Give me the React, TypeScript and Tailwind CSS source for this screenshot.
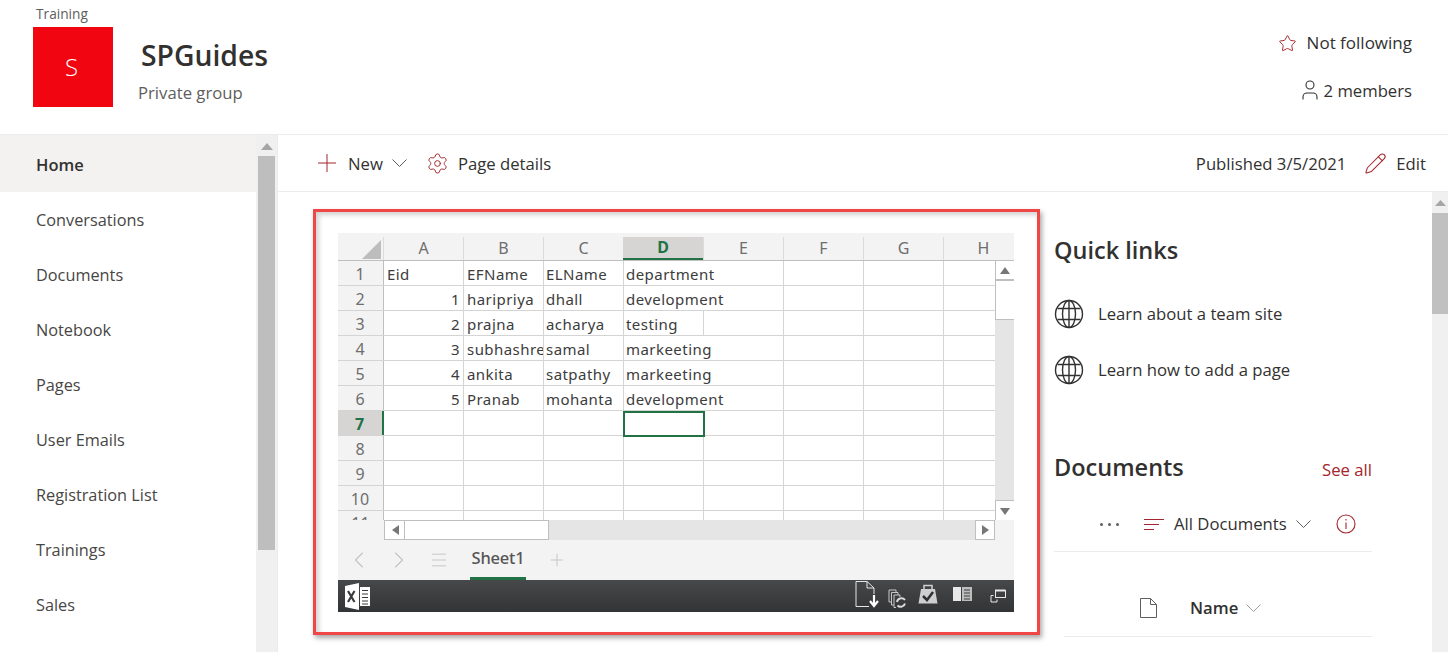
import React from 'react';
import { Plus, Settings, Star, User, Pencil, ChevronLeft, ChevronRight, Menu } from 'lucide-react';

const navItems = ['Home', 'Conversations', 'Documents', 'Notebook', 'Pages', 'User Emails', 'Registration List', 'Trainings', 'Sales'];
const columns = ['A', 'B', 'C', 'D', 'E', 'F', 'G', 'H'];

// a cell whose text spills over hides its right border
const rows: { a?: string; b?: string; c?: string; d?: string; open?: boolean }[] = [
  { a: 'Eid', b: 'EFName', c: 'ELName', d: 'department', open: true },
  { a: '1', b: 'haripriya', c: 'dhall', d: 'development', open: true },
  { a: '2', b: 'prajna', c: 'acharya', d: 'testing' },
  { a: '3', b: 'subhashre', c: 'samal', d: 'markeeting', open: true },
  { a: '4', b: 'ankita', c: 'satpathy', d: 'markeeting', open: true },
  { a: '5', b: 'Pranab', c: 'mohanta', d: 'development', open: true },
  {},
  {},
  {},
  {},
];

const Triangle = ({ dir }: { dir: 'up' | 'down' | 'left' | 'right' }) => {
  const points = { up: '1,10 6,3 11,10', down: '1,3 6,10 11,3', left: '10,1 3,6 10,11', right: '3,1 10,6 3,11' }[dir];
  return (
    <svg width="12" height="12" viewBox="0 0 12 12">
      <polygon points={points} fill="#777777" />
    </svg>
  );
};

const Chevron = ({ color = '#605e5c' }: { color?: string }) => (
  <svg width="15" height="8" viewBox="0 0 15 8" fill="none" stroke={color} strokeWidth="1">
    <path d="M0.5 0.5 L7.5 7.5 L14.5 0.5" />
  </svg>
);

const GlobeIcon = () => (
  <svg width="30" height="30" viewBox="0 0 30 30" fill="none" stroke="#323130" strokeWidth="1.4">
    <circle cx="15" cy="15" r="13.5" />
    <ellipse cx="15" cy="15" rx="6.5" ry="13.5" />
    <path d="M15 1.5 V28.5 M3.5 9.5 H26.5 M3.5 20.5 H26.5" />
  </svg>
);

const ExcelLogo = () => (
  <svg width="27" height="27" viewBox="0 0 27 27">
    <path d="M1 3 L15 0 V27 L1 24 Z" fill="#ffffff" />
    <path d="M16 4 H26 V23 H16 Z" fill="#ffffff" />
    <path d="M18 7.5 H24 M18 11 H24 M18 14.5 H24 M18 18 H24 M18 21 H24" stroke="#3a3b3d" strokeWidth="1" />
    <path d="M4 8 L10.5 19 M10.5 8 L4 19" stroke="#3a3b3d" strokeWidth="2.2" />
  </svg>
);

const BarIcons = () => (
  <div className="flex items-end pr-[8px] pb-[3px]">
    <svg width="25" height="27" viewBox="0 0 25 27" fill="none" stroke="#e6e6e6" strokeWidth="1">
      <path d="M14 25.5 H1 V0.5 H12 L19 7 V13 M12 0.5 V7 H19" />
      <path d="M19 14 V24 M15 20 L19 25 L23 20" strokeWidth="2.2" stroke="#ffffff" />
    </svg>
    <svg width="19" height="19" viewBox="0 0 19 19" fill="none" stroke="#c8c8c8" strokeWidth="1" className="ml-[8px]">
      <path d="M1 1 H8 V3 M1 1 V13 H3 M3.5 3.5 H10 V6 M3.5 3.5 V16 H6 M6 6 H12 V8 M6 6 V18.5 H8" />
      <path d="M9 13 A4.5 4.5 0 0 1 17 11 M17 14.5 A4.5 4.5 0 0 1 9.5 16.5" strokeWidth="2" stroke="#dcdcdc" />
    </svg>
    <svg width="20" height="20" viewBox="0 0 20 20" className="ml-[11px] mb-[4px]">
      <path d="M6 5 V1.5 H14 V5" fill="none" stroke="#d0d0d0" strokeWidth="1.5" />
      <path d="M3 5 H17 L19.5 19.5 H0.5 Z" fill="#cfcfcf" />
      <path d="M5 12 L9 16 L15 8" fill="none" stroke="#2f3032" strokeWidth="2.5" />
    </svg>
    <svg width="19" height="14" viewBox="0 0 19 14" className="ml-[15px] mb-[7px]">
      <rect x="0" y="0" width="8" height="14" fill="#e8e8e8" />
      <rect x="9" y="0" width="10" height="14" fill="#bdbdbd" />
      <path d="M11 3 H17 M11 6 H17 M11 9 H17 M11 12 H17" stroke="#3a3b3d" strokeWidth="1" />
    </svg>
    <svg width="16" height="14" viewBox="0 0 16 14" fill="none" stroke="#e8e8e8" className="ml-[18px] mb-[5px]">
      <rect x="5.5" y="1.5" width="10" height="7" strokeWidth="1" />
      <path d="M5 1.5 H15.5" strokeWidth="2" />
      <path d="M3.5 6.5 H1 V13 H7 V10.5" strokeWidth="1" />
    </svg>
  </div>
);

const Sheet = () => (
  <div className="w-[676px] h-[379px] bg-[#f3f3f3] flex flex-col overflow-hidden font-['Noto_Sans',sans-serif]">
    {/* column headers */}
    <div className="flex h-[28px] shrink-0 overflow-hidden border-b border-[#bfbfbf]">
      <div className="w-[45px] shrink-0 flex items-end justify-end pr-[2px] pb-[1px]">
        <svg width="19" height="19" viewBox="0 0 19 19"><polygon points="19,0 19,19 0,19" fill="#bdbdbd" /></svg>
      </div>
      {columns.map((c) => (
        <div
          key={c}
          className={
            c === 'D'
              ? "w-[80px] shrink-0 mt-[4px] pb-[2px] flex items-center justify-center text-[16px] font-bold text-[#217346] bg-[#d6d5d3] border-b-2 border-[#217346]"
              : "w-[80px] shrink-0 mt-[4px] pb-[2px] flex items-center justify-center text-[16px] text-[#6e6e6e] border-l border-[#dcdcdc]"
          }
        >
          {c}
        </div>
      ))}
    </div>

    {/* cells and vertical scrollbar */}
    <div className="flex h-[259px] shrink-0">
      <div className="w-[657px] overflow-hidden shrink-0 bg-white">
        {rows.map((r, i) => (
          <div key={i} className="flex h-[25px] border-b border-[#d4d4d4] text-[15px] text-[#3c3c3c] leading-[26px] tracking-[0.45px]">
            <div
              className={
                i === 6
                  ? "w-[46px] shrink-0 pr-[1px] text-center font-bold text-[#217346] bg-[#d6d5d3] border-r-2 border-[#217346] text-[16px] tracking-normal"
                  : "w-[46px] shrink-0 pr-[1px] text-center text-[#6e6e6e] bg-[#f3f3f3] border-r border-[#bfbfbf] text-[16px] tracking-normal"
              }
            >
              {i + 1}
            </div>
            <div className={r.a && r.a !== 'Eid' ? "w-[80px] shrink-0 border-r border-[#d4d4d4] text-right pr-[3px]" : "w-[80px] shrink-0 border-r border-[#d4d4d4] pl-[3px]"}>{r.a}</div>
            <div className="w-[80px] shrink-0 border-r border-[#d4d4d4] pl-[3px] whitespace-nowrap overflow-hidden">{r.b}</div>
            <div className="w-[80px] shrink-0 border-r border-[#d4d4d4] pl-[2px] whitespace-nowrap">{r.c}</div>
            {i === 6 ? (
              <div className="w-[82px] -ml-[1px] -mr-[1px] shrink-0 border-2 border-[#217346] h-[26px] z-10" />
            ) : (
              <div className={r.open ? "w-[80px] shrink-0 pl-[2px] whitespace-nowrap" : "w-[80px] shrink-0 border-r border-[#d4d4d4] pl-[2px] whitespace-nowrap"}>{r.d}</div>
            )}
            <div className="w-[80px] shrink-0 border-r border-[#d4d4d4]" />
            <div className="w-[80px] shrink-0 border-r border-[#d4d4d4]" />
            <div className="w-[80px] shrink-0 border-r border-[#d4d4d4]" />
            <div className="w-[80px] shrink-0" />
          </div>
        ))}
        <div className="flex h-[9px] text-[16px] leading-[24px] overflow-hidden">
          <div className="w-[46px] shrink-0 text-center text-[#6e6e6e] bg-[#f3f3f3] border-r border-[#bfbfbf]">11</div>
          <div className="w-[80px] shrink-0 border-r border-[#d4d4d4]" />
          <div className="w-[80px] shrink-0 border-r border-[#d4d4d4]" />
          <div className="w-[80px] shrink-0 border-r border-[#d4d4d4]" />
          <div className="w-[80px] shrink-0 border-r border-[#d4d4d4]" />
          <div className="w-[80px] shrink-0 border-r border-[#d4d4d4]" />
          <div className="w-[80px] shrink-0 border-r border-[#d4d4d4]" />
          <div className="w-[80px] shrink-0 border-r border-[#d4d4d4]" />
        </div>
      </div>
      <div className="w-[19px] shrink-0 bg-[#e5e5e5] flex flex-col justify-between">
        <div className="bg-white border-l border-b border-[#bfbfbf] h-[59px]">
          <div className="h-[20px] flex items-center justify-center border-b-2 border-[#bfbfbf]"><Triangle dir="up" /></div>
        </div>
        <div className="bg-white border-l border-t border-[#bfbfbf] h-[20px] flex items-center justify-center"><Triangle dir="down" /></div>
      </div>
    </div>

    {/* horizontal scrollbar */}
    <div className="flex h-[20px] shrink-0 pl-[46px] pr-[19px]">
      <div className="flex-1 flex bg-[#e5e5e5]">
        <div className="w-[21px] bg-white border border-[#bfbfbf] flex items-center justify-center"><Triangle dir="left" /></div>
        <div className="w-[144px] bg-white border-y border-r border-[#bfbfbf]" />
        <div className="flex-1" />
        <div className="w-[20px] bg-white border border-[#bfbfbf] flex items-center justify-center"><Triangle dir="right" /></div>
      </div>
    </div>

    {/* sheet tabs */}
    <div className="flex h-[40px] shrink-0 items-center text-[#c4c4c4]">
      <ChevronLeft className="w-[28px] h-[28px] ml-[7px]" strokeWidth={1} />
      <ChevronRight className="w-[28px] h-[28px] ml-[12px]" strokeWidth={1} />
      <Menu className="w-[20px] h-[20px] ml-[16px]" strokeWidth={1.1} />
      <div className="ml-[21px] w-[56px] h-[40px] flex items-center justify-center text-[16.5px] font-medium text-[#555555] border-b-[3px] border-[#217346] tracking-[-0.2px]">Sheet1</div>
      <Plus className="w-[20px] h-[20px] ml-[21px]" strokeWidth={1.1} />
    </div>

    {/* dark bar */}
    <div className="flex flex-1 items-center justify-between bg-gradient-to-b from-[#47484a] to-[#333436] pl-[6px]">
      <ExcelLogo />
      <BarIcons />
    </div>
  </div>
);

const App = () => {
  return (
    <div className="w-[1448px] h-[652px] overflow-hidden bg-white flex flex-col font-['Open_Sans',sans-serif] text-[#323130]">
      {/* ══════════════ SITE HEADER ══════════════ */}
      <header className="h-[135px] shrink-0 border-b border-[#edebe9] flex justify-between">
        <div className="pl-[33px]">
          <div className="h-[27px] pl-[3px] pt-[4px] text-[13.7px] leading-[20px] text-[#605e5c]">Training</div>
          <div className="flex">
            <div className="w-[80px] h-[80px] bg-[#f00511] flex items-center justify-center pr-[3px] text-white text-[24px] font-light">S</div>
            <div className="ml-[25px]">
              <div className="pl-[3px] pt-[8px] h-[42px] text-[28.3px] leading-[40px] font-semibold text-[#323130]">SPGuides</div>
              <div className="pt-[13px] text-[16.7px] leading-[22px] text-[#605e5c]">Private group</div>
            </div>
          </div>
        </div>
        <div className="pr-[36px] pt-[31px] flex flex-col items-end text-[#323130] leading-[24px]">
          <div className="flex items-center h-[24px] text-[17px]">
            <Star className="w-[19px] h-[19px] text-[#a4262c] mr-[10px]" strokeWidth={1.2} />
            Not following
          </div>
          <div className="flex items-center h-[24px] mt-[24px] text-[16.7px]">
            <User className="w-[24px] h-[24px] mr-[2px] -mt-[3px]" strokeWidth={1.1} />
            2 members
          </div>
        </div>
      </header>

      <div className="flex flex-1 min-h-0">
        {/* ══════════════ LEFT NAV ══════════════ */}
        <div className="w-[278px] shrink-0 flex border-r border-[#edebe9]">
          <nav className="w-[256px] shrink-0">
            {navItems.map((item, i) => (
              <div
                key={item}
                className={
                  i === 0
                    ? "h-[57px] flex items-center pl-[36px] pt-[4px] bg-[#f3f2f1] text-[16.5px] font-semibold text-[#323130]"
                    : "h-[55px] flex items-center pl-[36px] pt-[2px] text-[16.3px] text-[#484644]"
                }
              >
                {item}
              </div>
            ))}
          </nav>
          <div className="flex-1 bg-[#f0f0f0] flex flex-col items-center">
            <div className="h-[21px] flex items-center justify-center pt-[2px]">
              <svg width="12" height="7" viewBox="0 0 12 7"><polygon points="0,7 6,0 12,7" fill="#a6a6a6" /></svg>
            </div>
            <div className="w-[17px] h-[394px] bg-[#bebebe]" />
          </div>
        </div>

        {/* ══════════════ MAIN ══════════════ */}
        <div className="flex-1 min-w-0 flex flex-col">
          <div className="h-[57px] shrink-0 pt-[1px] border-b border-[#edebe9] flex items-center justify-between pl-[40px] pr-[22px] text-[16.7px] text-[#323130]">
            <div className="flex items-center">
              <svg width="18" height="18" viewBox="0 0 18 18" fill="none" stroke="#a4262c" strokeWidth="1">
                <path d="M9 0 V18 M0 9 H18" />
              </svg>
              <span className="ml-[12px]">New</span>
              <span className="ml-[9px]"><Chevron /></span>
              <Settings className="w-[23px] h-[23px] ml-[19px] text-[#a4262c]" strokeWidth={1} />
              <span className="ml-[9px]">Page details</span>
            </div>
            <div className="flex items-center">
              <span>Published 3/5/2021</span>
              <Pencil className="w-[23px] h-[23px] ml-[18px] text-[#a4262c]" strokeWidth={1.1} />
              <span className="ml-[9px]">Edit</span>
            </div>
          </div>

          <div className="flex-1 min-h-0 flex">
            <div className="flex-1 min-w-0 flex pl-[35px] pt-[17px]">
              {/* red highlight round the embedded workbook */}
              <div className="w-[727px] h-[426px] shrink-0 border-[3px] border-[#f04646] shadow-[2px_3px_5px_rgba(0,0,0,0.35),inset_3px_3px_5px_rgba(0,0,0,0.18)] pl-[22px] pt-[21px]">
                <Sheet />
              </div>

              {/* ══════════════ RIGHT COLUMN ══════════════ */}
              <div className="ml-[14px] w-[318px] shrink-0">
                <div className="pt-[24px] h-[59px] text-[23.5px] leading-[34px] font-semibold text-[#323130]">Quick links</div>
                <div className="mt-[32px] flex items-center h-[28px]">
                  <GlobeIcon />
                  <span className="ml-[14px] text-[16.7px] text-[#323130]">Learn about a team site</span>
                </div>
                <div className="mt-[28px] flex items-center h-[28px]">
                  <GlobeIcon />
                  <span className="ml-[14px] text-[16.7px] text-[#323130]">Learn how to add a page</span>
                </div>
                <div className="mt-[67px] flex items-center justify-between h-[34px]">
                  <span className="text-[23.5px] font-semibold text-[#323130]">Documents</span>
                  <span className="text-[16.7px] text-[#a4262c] pt-[3px]">See all</span>
                </div>
                <div className="mt-[21px] h-[46px] pb-[9px] border-b border-[#edebe9] flex items-center text-[16.7px] text-[#323130] pl-[46px]">
                  <span className="flex gap-[5px] w-[44px]">
                    <span className="w-[3px] h-[3px] rounded-full bg-[#605e5c]" />
                    <span className="w-[3px] h-[3px] rounded-full bg-[#605e5c]" />
                    <span className="w-[3px] h-[3px] rounded-full bg-[#605e5c]" />
                  </span>
                  <svg width="20" height="13" viewBox="0 0 20 13" fill="none" stroke="#a4262c" strokeWidth="1">
                    <path d="M0 1.5 H20 M0 6.5 H15 M0 11.5 H10" />
                  </svg>
                  <span className="ml-[10px]">All Documents</span>
                  <span className="ml-[9px]"><Chevron /></span>
                  <svg width="20" height="20" viewBox="0 0 20 20" fill="none" stroke="#a4262c" strokeWidth="1.1" className="ml-[25px]">
                    <circle cx="10" cy="10" r="9" />
                    <path d="M10 8.5 V15 M10 5 V6.5" />
                  </svg>
                </div>
                <div className="ml-[10px] mt-[39px] h-[46px] pb-[12px] border-b border-[#edebe9] flex items-center pl-[76px] text-[16.7px] font-semibold text-[#323130]">
                  <svg width="17" height="20" viewBox="0 0 17 20" fill="none" stroke="#605e5c" strokeWidth="1">
                    <path d="M0.5 0.5 H10.5 L16.5 6.5 V19.5 H0.5 Z M10.5 0.5 V6.5 H16.5" />
                  </svg>
                  <span className="ml-[33px]">Name</span>
                  <span className="ml-[8px]"><Chevron color="#a19f9d" /></span>
                </div>
              </div>
            </div>

            {/* page scrollbar */}
            <div className="w-[16px] shrink-0 bg-[#f0f0f0] flex flex-col items-center">
              <div className="h-[21px] flex items-center justify-center">
                <svg width="11" height="6" viewBox="0 0 11 6"><polygon points="0,6 5.5,0 11,6" fill="#a6a6a6" /></svg>
              </div>
              <div className="w-full h-[101px] bg-[#c0c0c0]" />
            </div>
          </div>
        </div>
      </div>
    </div>
  );
};

export default App;
